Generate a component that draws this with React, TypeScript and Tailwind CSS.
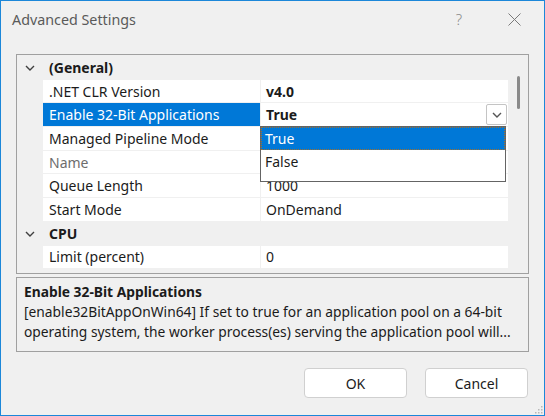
import React from 'react';

type Row =
  | { kind: 'cat'; label: string }
  | { kind: 'prop'; label: string; value: string; bold?: boolean; selected?: boolean; disabled?: boolean };

// values hidden by the open drop list are left empty
const rows: Row[] = [
  { kind: 'cat', label: '(General)' },
  { kind: 'prop', label: '.NET CLR Version', value: 'v4.0', bold: true },
  { kind: 'prop', label: 'Enable 32-Bit Applications', value: 'True', bold: true, selected: true },
  { kind: 'prop', label: 'Managed Pipeline Mode', value: '' },
  { kind: 'prop', label: 'Name', value: '', disabled: true },
  { kind: 'prop', label: 'Queue Length', value: '1000' },
  { kind: 'prop', label: 'Start Mode', value: 'OnDemand' },
  { kind: 'cat', label: 'CPU' },
  { kind: 'prop', label: 'Limit (percent)', value: '0' },
];

function Chevron({ className }: { className?: string }) {
  return (
    <svg width="10" height="6" viewBox="0 0 10 6" className={className}>
      <path d="M1 1 L5 5 L9 1" fill="none" stroke="currentColor" strokeWidth="1.4" />
    </svg>
  );
}

function DropList() {
  return (
    <div className="absolute left-[-1px] top-full z-10 w-[246px] h-[56px] border border-[#646464] bg-white">
      <div className="h-[23px] flex items-center pl-[3px] bg-[#0078d7] text-white border border-dotted border-[#a0702f]">
        True
      </div>
      <div className="h-[23px] flex items-center pl-[4px] text-[#1b1b1b]">False</div>
    </div>
  );
}

function PropRow({ row }: { row: Row }) {
  if (row.kind === 'cat') {
    return (
      <div className="flex h-[23.7px] shrink-0 bg-[#f0f0f0]">
        <div className="w-[26px] flex items-center justify-center text-[#404040]">
          <Chevron />
        </div>
        <div className="pl-[6px] flex items-center font-bold text-[#1b1b1b]">{row.label}</div>
      </div>
    );
  }
  return (
    <div className="flex h-[23.7px] shrink-0">
      <div className="w-[26px] bg-[#f0f0f0]" />
      <div
        className={
          row.selected
            ? 'w-[217px] flex items-center pl-[6px] bg-[#0078d7] text-white border-b border-[#f0f0f0]'
            : row.disabled
              ? 'w-[217px] flex items-center pl-[6px] bg-white text-[#6d6d6d] border-b border-[#f0f0f0]'
              : 'w-[217px] flex items-center pl-[6px] bg-white text-[#1b1b1b] border-b border-[#f0f0f0]'
        }
      >
        {row.label}
      </div>
      <div className="w-px bg-[#f0f0f0]" />
      <div className="relative flex-1 flex items-center pl-[5px] bg-white border-b border-[#f0f0f0] text-[#1b1b1b]">
        <span className={row.bold ? 'font-bold' : ''}>{row.value}</span>
        {row.selected && (
          <>
            <div className="ml-auto mr-[1px] w-[21px] h-[21px] flex items-center justify-center border border-[#c4c4c4] rounded-[2px] bg-white text-[#555]">
              <Chevron />
            </div>
            <DropList />
          </>
        )}
      </div>
    </div>
  );
}

export default function App() {
  return (
    <div
      className="w-[545px] h-[416px] flex flex-col bg-[#f0f0f0] border border-[#1c87d9] text-[14px] text-[#1b1b1b]"
      style={{ fontFamily: '"Noto Sans", "Open Sans", sans-serif' }}
    >
      {/* title bar */}
      <div className="h-[37px] shrink-0 flex items-center pl-[11px]">
        <span className="text-[14.3px] text-[#5a5a5a]">Advanced Settings</span>
        <span className="ml-auto mr-[46px] text-[15px] font-light text-[#8a8a8a]">?</span>
        <svg width="13" height="13" viewBox="0 0 13 13" className="mr-[23px] text-[#7a7a7a]">
          <path d="M0.5 0.5 L12.5 12.5 M12.5 0.5 L0.5 12.5" stroke="currentColor" strokeWidth="1" fill="none" />
        </svg>
      </div>

      <div className="flex-1 flex flex-col px-[15px] pt-[16px]">
        {/* property grid */}
        <div className="h-[220px] flex border border-[#a0a0a0] bg-[#f0f0f0]">
          <div className="flex-1 flex flex-col pt-px">
            {rows.map((r, i) => (
              <PropRow key={i} row={r} />
            ))}
          </div>
          <div className="w-[20px] flex justify-center pt-[21px]">
            <div className="w-[3px] h-[33px] rounded-full bg-[#8a8a8a]" />
          </div>
        </div>

        {/* description */}
        <div className="mt-[3px] h-[75px] border border-[#a0a0a0] px-[7px] pt-[4px] text-[13.8px]">
          <div className="font-bold leading-[20px] text-[#1b1b1b]">Enable 32-Bit Applications</div>
          <div className="leading-[20px] text-[#1b1b1b]">
            [enable32BitAppOnWin64] If set to true for an application pool on a 64-bit operating system, the worker process(es) serving the application pool will...
          </div>
        </div>

        {/* buttons */}
        <div className="mt-[16px] mr-px flex justify-end gap-[18px]">
          <button className="w-[103px] h-[30px] bg-white border border-[#d0d0d0] rounded-[4px] text-[#1b1b1b]">OK</button>
          <button className="w-[103px] h-[30px] bg-white border border-[#d0d0d0] rounded-[4px] text-[#1b1b1b]">Cancel</button>
        </div>
        <div className="flex-1 flex items-end justify-end -mr-[14px] pb-[1px]">
          <svg width="8" height="8" viewBox="0 0 8 8" className="text-[#b8b8b8]">
            <rect x="6" y="0" width="1.5" height="1.5" fill="currentColor" />
            <rect x="3" y="3" width="1.5" height="1.5" fill="currentColor" />
            <rect x="6" y="3" width="1.5" height="1.5" fill="currentColor" />
            <rect x="0" y="6" width="1.5" height="1.5" fill="currentColor" />
            <rect x="3" y="6" width="1.5" height="1.5" fill="currentColor" />
            <rect x="6" y="6" width="1.5" height="1.5" fill="currentColor" />
          </svg>
        </div>
      </div>
    </div>
  );
}
